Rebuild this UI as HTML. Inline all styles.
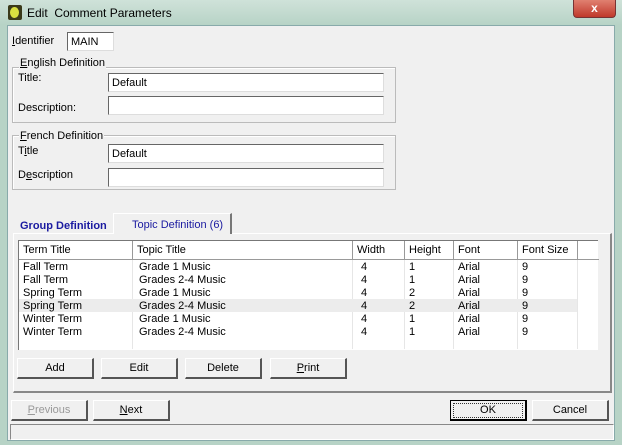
<!DOCTYPE html>
<html><head><style>
*{box-sizing:border-box;margin:0;padding:0}
body{width:622px;height:445px;overflow:hidden;background:#b7d3c6;font-family:"Liberation Sans",sans-serif;font-size:11px;color:#000;position:relative}
.a{position:absolute}
.client{left:7px;top:25px;width:608px;height:416px;background:#f0f0f0;border:1px solid #8aa;}
.in{background:#fff;border-top:1px solid #666;border-left:1px solid #666;border-right:1px solid #ddd;border-bottom:1px solid #ddd;padding:3px 3px 1px;line-height:13px}
.grp{border:1px solid #bbb;box-shadow:inset 1px 1px 0 #fff}
.leg{background:#f0f0f0;padding:0 1px}
.btn{background:#f0f0f0;border-top:1px solid #fff;border-left:1px solid #fff;border-right:2px solid #555;border-bottom:2px solid #555;text-align:center;line-height:19px}
.col{position:absolute;top:0;height:108px;border-left:1px solid #e6e6e6}
.hdr{position:absolute;top:0;height:18px;line-height:19px;padding-left:4px;border-right:1px solid #999;background:#fff}
.row{position:absolute;left:0;width:575px;height:13px;line-height:14px}
.row span{position:absolute}
</style></head><body>
<div class="a" style="left:0;top:0;width:622px;height:25px;background:linear-gradient(#cfe2d9,#b7d3c6)"></div>
<div class="a" style="left:8px;top:5px;width:14px;height:15px;background:#3a3a1a;border-radius:2px"></div>
<div class="a" style="left:10px;top:7px;width:9px;height:11px;background:#d8e040;border-radius:50%"></div>
<div class="a" style="left:27px;top:6px;font-size:12px">Edit&nbsp; Comment Parameters</div>
<div class="a" style="left:573px;top:0;width:43px;height:18px;background:linear-gradient(#e08070,#c0392b);border:1px solid #733;border-top:none;border-radius:0 0 4px 4px;color:#fff;text-align:center;font-weight:bold;font-size:12px;line-height:17px">x</div>
<div class="a client"></div>

<div class="a" style="left:12px;top:35px"><u>I</u>dentifier</div>
<div class="a in" style="left:67px;top:32px;width:47px;height:19px">MAIN</div>

<div class="a grp" style="left:12px;top:67px;width:384px;height:56px"></div>
<div class="a leg" style="left:19px;top:57px"><u>E</u>nglish Definition</div>
<div class="a" style="left:18px;top:72px">Title:</div>
<div class="a in" style="left:108px;top:73px;width:276px;height:19px">Default</div>
<div class="a" style="left:18px;top:102px">Description:</div>
<div class="a in" style="left:108px;top:96px;width:276px;height:19px"></div>

<div class="a grp" style="left:12px;top:135px;width:384px;height:55px"></div>
<div class="a leg" style="left:19px;top:130px"><u>F</u>rench Definition</div>
<div class="a" style="left:18px;top:145px">T<u>i</u>tle</div>
<div class="a in" style="left:108px;top:144px;width:276px;height:19px">Default</div>
<div class="a" style="left:18px;top:169px">D<u>e</u>scription</div>
<div class="a in" style="left:108px;top:168px;width:276px;height:19px"></div>

<div class="a" style="left:13px;top:233px;width:599px;height:160px;border-top:1px solid #fff;border-left:1px solid #fff;border-right:2px solid #888;border-bottom:2px solid #888"></div>
<div class="a" style="left:20px;top:220px;color:#1a1aa0;font-weight:bold;font-size:11px">Group Definition</div>
<div class="a" style="left:113px;top:213px;width:119px;height:21px;background:#f0f0f0;border-top:1px solid #fff;border-left:1px solid #fff;border-right:2px solid #777"></div>
<div class="a" style="left:132px;top:219px;color:#1a1aa0">Topic Definition (6)</div>

<div class="a" style="left:18px;top:240px;width:580px;height:110px;background:#fff;border-top:1px solid #777;border-left:1px solid #777">
 <div class="col" style="left:113px"></div><div class="col" style="left:333px"></div><div class="col" style="left:385px"></div><div class="col" style="left:434px"></div><div class="col" style="left:498px"></div><div class="col" style="left:558px"></div>
 <div class="hdr" style="left:0;width:114px">Term Title</div>
 <div class="hdr" style="left:114px;width:220px">Topic Title</div>
 <div class="hdr" style="left:334px;width:52px">Width</div>
 <div class="hdr" style="left:386px;width:49px">Height</div>
 <div class="hdr" style="left:435px;width:64px">Font</div>
 <div class="hdr" style="left:499px;width:60px">Font Size</div>
 <div class="a" style="left:0;top:18px;width:580px;height:1px;background:#999"></div>
 <div class="row" style="top:19px"><span style="left:4px">Fall Term</span><span style="left:120px">Grade 1 Music</span><span style="left:342px">4</span><span style="left:390px">1</span><span style="left:439px">Arial</span><span style="left:503px">9</span></div>
 <div class="row" style="top:32px"><span style="left:4px">Fall Term</span><span style="left:120px">Grades 2-4 Music</span><span style="left:342px">4</span><span style="left:390px">1</span><span style="left:439px">Arial</span><span style="left:503px">9</span></div>
 <div class="row" style="top:45px"><span style="left:4px">Spring Term</span><span style="left:120px">Grade 1 Music</span><span style="left:342px">4</span><span style="left:390px">2</span><span style="left:439px">Arial</span><span style="left:503px">9</span></div>
 <div class="row" style="top:58px;background:#ececec;width:558px"><span style="left:4px">Spring Term</span><span style="left:120px">Grades 2-4 Music</span><span style="left:342px">4</span><span style="left:390px">2</span><span style="left:439px">Arial</span><span style="left:503px">9</span></div>
 <div class="row" style="top:71px"><span style="left:4px">Winter Term</span><span style="left:120px">Grade 1 Music</span><span style="left:342px">4</span><span style="left:390px">1</span><span style="left:439px">Arial</span><span style="left:503px">9</span></div>
 <div class="row" style="top:84px"><span style="left:4px">Winter Term</span><span style="left:120px">Grades 2-4 Music</span><span style="left:342px">4</span><span style="left:390px">1</span><span style="left:439px">Arial</span><span style="left:503px">9</span></div>
</div>

<div class="a btn" style="left:17px;top:358px;width:77px;height:21px">Add</div>
<div class="a btn" style="left:101px;top:358px;width:77px;height:21px">Edit</div>
<div class="a btn" style="left:185px;top:358px;width:77px;height:21px">Delete</div>
<div class="a btn" style="left:270px;top:358px;width:77px;height:21px"><u>P</u>rint</div>

<div class="a btn" style="left:11px;top:400px;width:77px;height:21px;color:#999"><u>P</u>revious</div>
<div class="a btn" style="left:93px;top:400px;width:77px;height:21px"><u>N</u>ext</div>
<div class="a btn" style="left:450px;top:400px;width:77px;height:21px;border:1px solid #000;border-right:2px solid #000;border-bottom:2px solid #000"><span style="display:block;margin:2px;border:1px dotted #333;line-height:13px">OK</span></div>
<div class="a btn" style="left:532px;top:400px;width:77px;height:21px">Cancel</div>

<div class="a" style="left:10px;top:424px;width:604px;height:16px;border-top:1px solid #888;border-left:1px solid #888;border-right:1px solid #fff;border-bottom:1px solid #fff"></div>
</body></html>
